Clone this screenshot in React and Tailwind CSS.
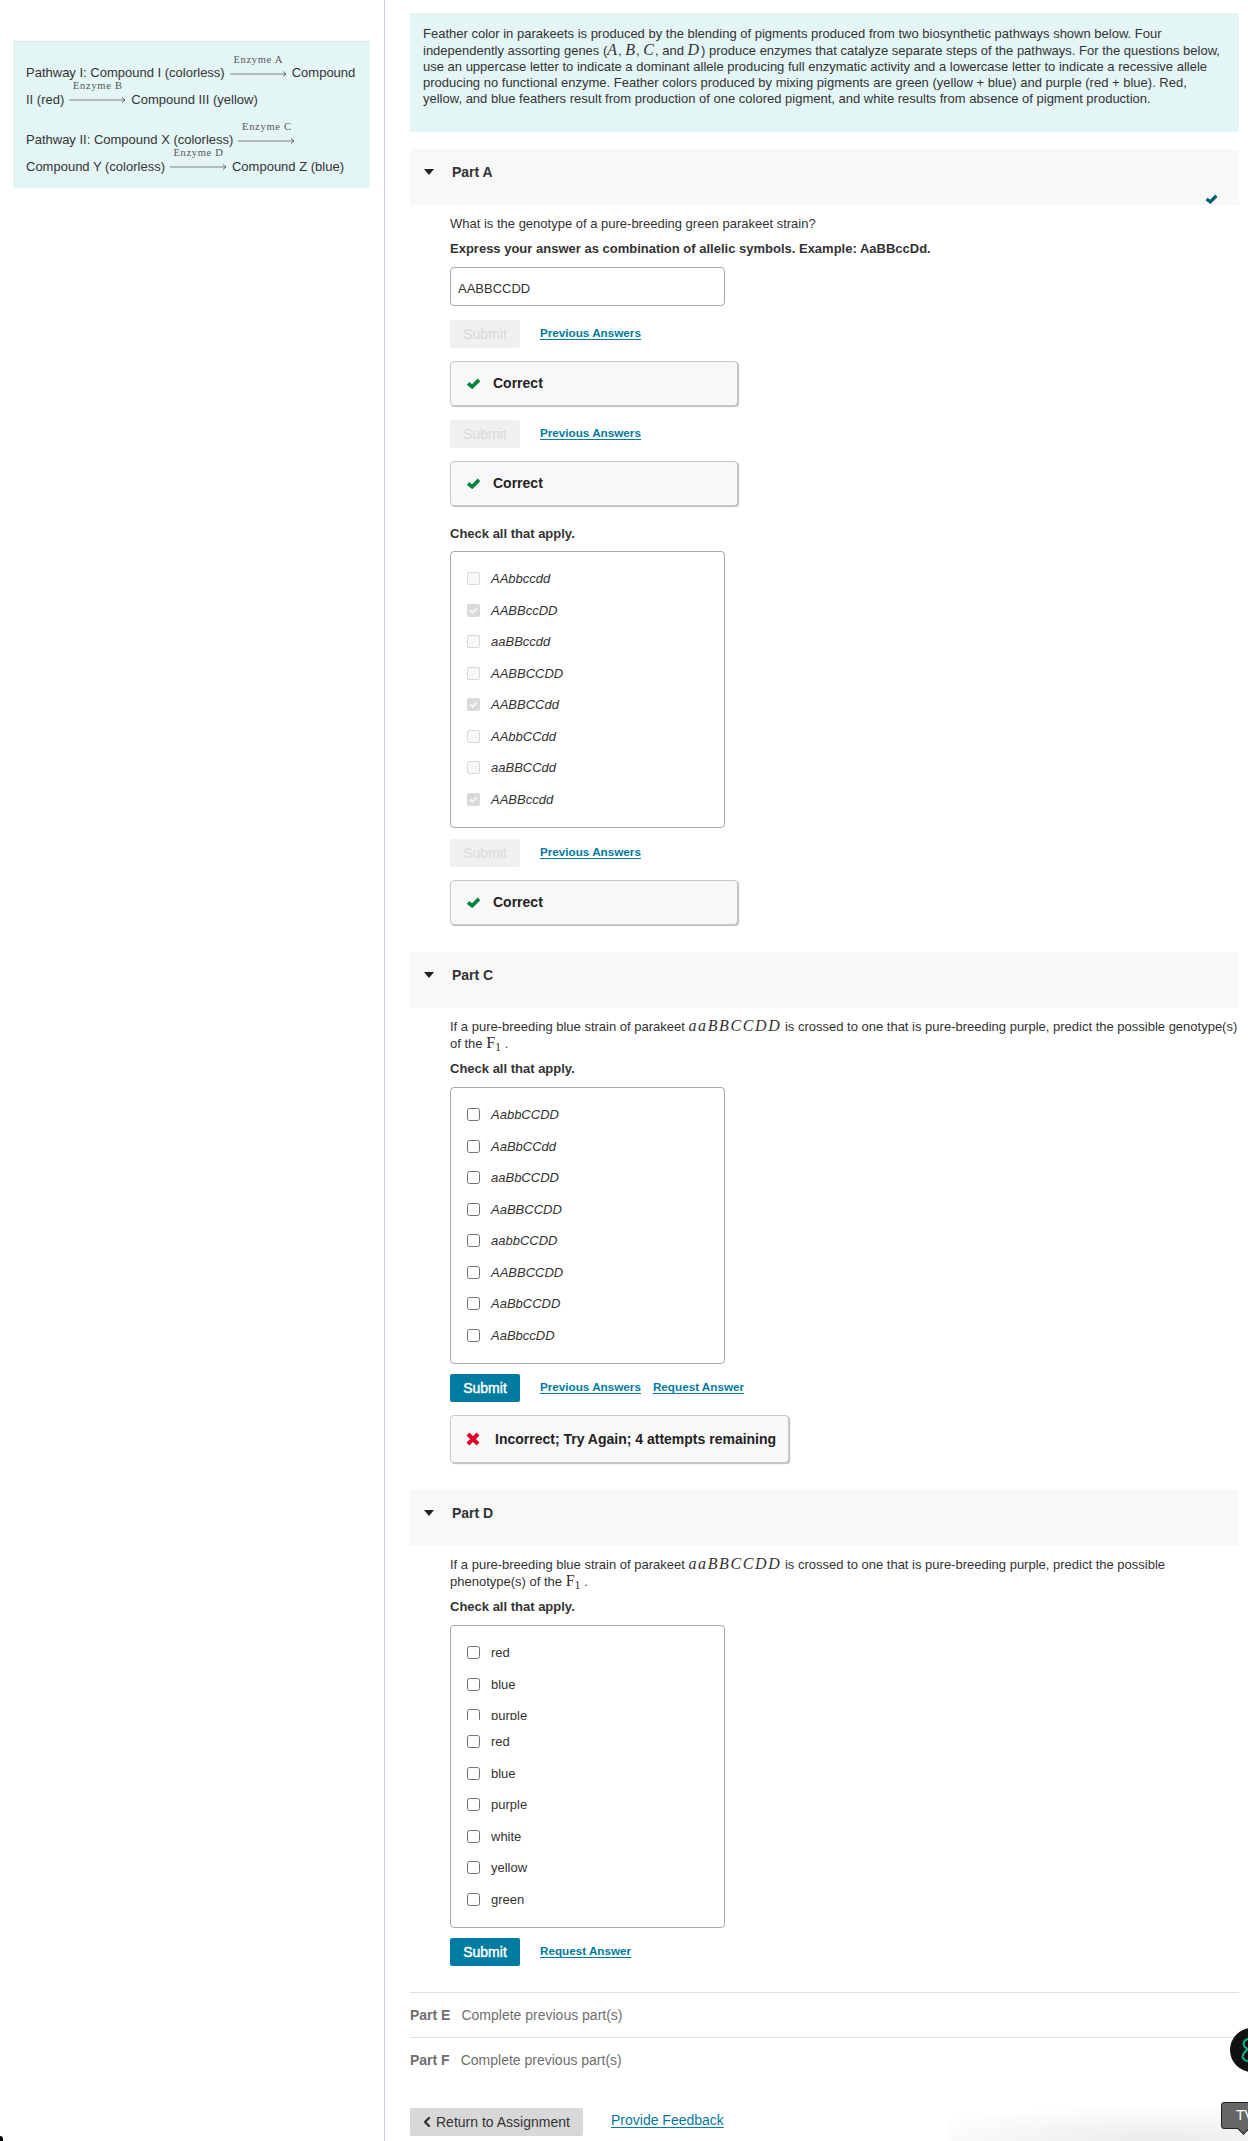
import { ChevronLeft } from 'lucide-react'

const math = "font-['Liberation_Serif',serif] italic text-[16px] leading-none"

function Arrow({ label, width = 57 }) {
  return (
    <span className="relative inline-block align-middle mx-[5px]" style={{ width }}>
      <span className="absolute left-0 right-0 -top-[15px] text-center text-[10.5px] leading-none tracking-[0.7px] text-[#555] whitespace-nowrap font-['Liberation_Serif',serif]">
        {label}
      </span>
      <svg width={width} height="8" viewBox={`0 0 ${width} 8`} className="block">
        <path d={`M0 4H${width - 1}`} stroke="#666" strokeWidth="0.8" fill="none" />
        <path d={`M${width - 4} 1.5L${width - 1} 4L${width - 4} 6.5`} stroke="#444" strokeWidth="0.8" fill="none" />
      </svg>
    </span>
  )
}

function Check({ className = '', color = '#00843d' }) {
  return (
    <svg viewBox="0 0 16 12" className={className}>
      <path d="M2 6L6.5 9.5L14 2" stroke={color} strokeWidth="4" fill="none" />
    </svg>
  )
}

function Actions({ disabled, prev = true, request }) {
  return (
    <div className="flex items-center">
      <button className={`w-[70px] h-[28px] rounded-[2px] text-[14px] ${disabled ? 'bg-[#f0f0f0] text-[#d9d9d9]' : 'bg-[#027ba0] text-white [-webkit-text-stroke:0.4px_white]'}`}>
        Submit
      </button>
      <div className="flex gap-[12px] ml-[20px] -mt-[2px] text-[11.7px] font-bold text-[#027a9e] underline underline-offset-2">
        {prev && <a>Previous Answers</a>}
        {request && <a>Request Answer</a>}
      </div>
    </div>
  )
}

function Feedback({ children, wrong }) {
  return (
    <div className={`flex items-center rounded-[4px] border border-[#c8c8c8] bg-[#f8f8f8] shadow-[1px_1px_1px_#bbb] pl-[15px] text-[14px] font-bold text-[#222] ${wrong ? 'w-[339px] h-[48px]' : 'w-[288px] h-[45px]'}`}>
      {wrong ? (
        <svg viewBox="0 0 14 14" className="w-[14px] h-[14px] mr-[15px]">
          <path d="M2 2L12 12M12 2L2 12" stroke="#e0002a" strokeWidth="4" />
        </svg>
      ) : (
        <Check className="w-[15px] h-[11px] mr-[12px]" />
      )}
      {children}
    </div>
  )
}

function Option({ label, italic, checked, dim }) {
  return (
    <div className="flex items-center h-[31.5px] pl-[16px]">
      {dim ? (
        <span className={`flex items-center justify-center w-[13px] h-[13px] rounded-[2px] border border-[#d9d9d9] ${checked ? 'bg-[#d9d9d9]' : 'bg-[#f8f8f8]'}`}>
          {checked && <Check className="w-[9px] h-[7px]" color="#f4f4f4" />}
        </span>
      ) : (
        <span className="w-[13px] h-[13px] rounded-[2.5px] border border-[#707070] bg-white" />
      )}
      <span className={`ml-[11px] text-[13px] text-[#333] ${italic ? 'italic' : ''}`}>{label}</span>
    </div>
  )
}

function OptionBox({ children, className = '' }) {
  return (
    <div className={`w-[275px] border border-[#a8a8a8] rounded-[4px] pt-[11px] pb-[12px] ${className}`}>
      {children}
    </div>
  )
}

function PartHeader({ name, done }) {
  return (
    <div className="relative flex h-[56px] bg-[#f8f8f8] pt-[15px] pl-[14px] text-[14px] font-bold text-[#333]">
      <span className="mt-[5px] w-0 h-0 border-x-[5.5px] border-x-transparent border-t-[6px] border-t-[#222]" />
      <span className="ml-[18px] leading-[16px]">{name}</span>
      {done && <Check className="absolute right-[21px] bottom-[1px] w-[13px] h-[10px]" color="#055a73" />}
    </div>
  )
}

function F1() {
  return (
    <span className="font-['Liberation_Serif',serif] text-[16px] leading-none">
      F<sub>1</sub>
    </span>
  )
}

const partAOptions = [
  ['AAbbccdd', false],
  ['AABBccDD', true],
  ['aaBBccdd', false],
  ['AABBCCDD', false],
  ['AABBCCdd', true],
  ['AAbbCCdd', false],
  ['aaBBCCdd', false],
  ['AABBccdd', true],
]
const partCOptions = ['AabbCCDD', 'AaBbCCdd', 'aaBbCCDD', 'AaBBCCDD', 'aabbCCDD', 'AABBCCDD', 'AaBbCCDD', 'AaBbccDD']
const colors = ['red', 'blue', 'purple', 'white', 'yellow', 'green']

export default function App() {
  return (
    <div className="relative flex h-[2141px] overflow-hidden bg-white font-['Liberation_Sans',Arial,sans-serif] text-[#333]">
      {/* left column with the pathways */}
      <div className="w-[385px] shrink-0 border-r border-[#c5cfe0] pt-[41px] pl-[13px] pr-[14px]">
        <div className="bg-[#e4f5f6] border-t border-[#dfe6e8] h-[147px] pl-[13px] pt-[18px] text-[13px] leading-[26.5px] whitespace-nowrap">
          <div>
            Pathway I: Compound I (colorless)
            <Arrow label="Enzyme A" />
            Compound
            <br />
            II (red)
            <Arrow label="Enzyme B" />
            Compound III (yellow)
          </div>
          <div className="mt-[14px]">
            Pathway II: Compound X (colorless)
            <Arrow label="Enzyme C" />
            <br />
            Compound Y (colorless)
            <Arrow label="Enzyme D" />
            Compound Z (blue)
          </div>
        </div>
      </div>

      {/* main */}
      <div className="w-[829px] ml-[25px] pt-[13px]">
        <div className="h-[119px] bg-[#e4f5f6] pl-[13px] pt-[13px] pr-[13px] text-[13px] leading-[16px]">
          Feather color in parakeets is produced by the blending of pigments produced from two biosynthetic pathways shown below. Four independently assorting genes (
          <span className={`${math} pr-[1px]`}>A</span>, <span className={`${math} pr-[1px]`}>B</span>, <span className={`${math} pr-[1px]`}>C</span>, and <span className={`${math} pr-[2px]`}>D</span>
          ) produce enzymes that catalyze separate steps of the pathways. For the questions below, use an uppercase letter to indicate a dominant allele producing full enzymatic activity and a lowercase letter to indicate a recessive allele producing no functional enzyme. Feather colors produced by mixing pigments are green (yellow + blue) and purple (red + blue). Red, yellow, and blue feathers result from production of one colored pigment, and white results from absence of pigment production.
        </div>

        {/* Part A */}
        <div className="mt-[17px]">
          <PartHeader name="Part A" done />
        </div>
        <div className="pl-[40px]">
          <p className="mt-[11px] text-[13px] leading-[16px]">What is the genotype of a pure-breeding green parakeet strain?</p>
          <p className="mt-[9px] text-[13px] leading-[16px] font-bold">Express your answer as combination of allelic symbols. Example: AaBBccDd.</p>
          <div className="mt-[10px] flex items-center w-[275px] h-[39px] border border-[#a8a8a8] rounded-[4px] pl-[7px] pt-[4px] text-[13px]">AABBCCDD</div>
          <div className="mt-[14px]"><Actions disabled /></div>
          <div className="mt-[13px]"><Feedback>Correct</Feedback></div>
          <div className="mt-[14px]"><Actions disabled /></div>
          <div className="mt-[13px]"><Feedback>Correct</Feedback></div>
          <p className="mt-[20px] text-[13px] leading-[16px] font-bold">Check all that apply.</p>
          <OptionBox className="mt-[9px]">
            {partAOptions.map(([label, checked]) => (
              <Option key={label} label={label} italic dim checked={checked} />
            ))}
          </OptionBox>
          <div className="mt-[11px]"><Actions disabled /></div>
          <div className="mt-[13px]"><Feedback>Correct</Feedback></div>
        </div>

        {/* Part C */}
        <div className="mt-[27px]">
          <PartHeader name="Part C" />
        </div>
        <div className="pl-[40px]">
          <p className="mt-[10px] text-[13px] leading-[17px]">
            If a pure-breeding blue strain of parakeet <span className={`${math} tracking-[1.6px]`}>aaBBCCDD</span> is crossed to one that is pure-breeding purple, predict the possible genotype(s) of the <F1 /> .
          </p>
          <p className="mt-[9px] text-[13px] leading-[16px] font-bold">Check all that apply.</p>
          <OptionBox className="mt-[10px]">
            {partCOptions.map((label) => (
              <Option key={label} label={label} italic />
            ))}
          </OptionBox>
          <div className="mt-[10px]"><Actions request /></div>
          <div className="mt-[13px]"><Feedback wrong>Incorrect; Try Again; 4 attempts remaining</Feedback></div>
        </div>

        {/* Part D */}
        <div className="mt-[27px]">
          <PartHeader name="Part D" />
        </div>
        <div className="pl-[40px]">
          <p className="mt-[10px] text-[13px] leading-[17px]">
            If a pure-breeding blue strain of parakeet <span className={`${math} tracking-[1.6px]`}>aaBBCCDD</span> is crossed to one that is pure-breeding purple, predict the possible phenotype(s) of the <F1 /> .
          </p>
          <p className="mt-[9px] text-[13px] leading-[16px] font-bold">Check all that apply.</p>
          <OptionBox className="mt-[10px]">
            {/* the first rows are cut off in the original */}
            <div className="h-[83px] overflow-hidden mb-[6px]">
              {colors.slice(0, 3).map((label) => (
                <Option key={label} label={label} />
              ))}
            </div>
            {colors.map((label) => (
              <Option key={label} label={label} />
            ))}
          </OptionBox>
          <div className="mt-[10px]"><Actions prev={false} request /></div>
        </div>

        {/* locked parts */}
        <div className="mt-[26px] border-t border-[#dde1e6] h-[45px] flex items-center text-[14px] text-[#6f6f6f]">
          <b>Part E</b>
          <span className="ml-[11px]">Complete previous part(s)</span>
        </div>
        <div className="border-t border-[#dde1e6] h-[45px] flex items-center text-[14px] text-[#6f6f6f]">
          <b>Part F</b>
          <span className="ml-[11px]">Complete previous part(s)</span>
        </div>

        <div className="mt-[26px] flex items-center">
          <button className="flex items-center w-[173px] h-[28px] pl-[9px] bg-[#d8d8d8] rounded-[2px] text-[14px] text-[#333]">
            <ChevronLeft size={16} strokeWidth={3.5} className="mr-[1px]" />
            Return to Assignment
          </button>
          <a className="ml-[28px] -mt-[4px] text-[14px] text-[#027a9e] underline underline-offset-2">Provide Feedback</a>
        </div>
      </div>

      {/* floating widgets */}
      <div className="absolute right-0 bottom-0 w-[300px] h-[36px] bg-[radial-gradient(ellipse_90%_100%_at_70%_100%,#ebebeb,transparent)]" />
      <div className="absolute left-0 bottom-0 w-[3px] h-[5px] bg-black rounded-tr-full" />
      <div className="absolute right-[-26px] top-[2028px] w-[44px] h-[44px] rounded-full bg-[#111]">
        <svg viewBox="0 0 44 44" className="w-[44px] h-[44px]">
          <path d="M26 12C16 8 10 15 16 20L24 26C28 32 16 36 13 30C11 26 18 20 24 17" stroke="#0fa77d" strokeWidth="2.2" fill="none" />
        </svg>
      </div>
      <div className="absolute right-[-8px] top-[2102px] w-[35px] h-[27px] rounded-[3px] border border-[#222] bg-[#666] pl-[14px] pt-[3px] text-[14px] text-white leading-[18px] whitespace-nowrap">
        TV
        <span className="absolute left-[17px] bottom-[-5px] w-[9px] h-[9px] rotate-45 bg-[#666] border-r border-b border-[#222]" />
      </div>
    </div>
  )
}
